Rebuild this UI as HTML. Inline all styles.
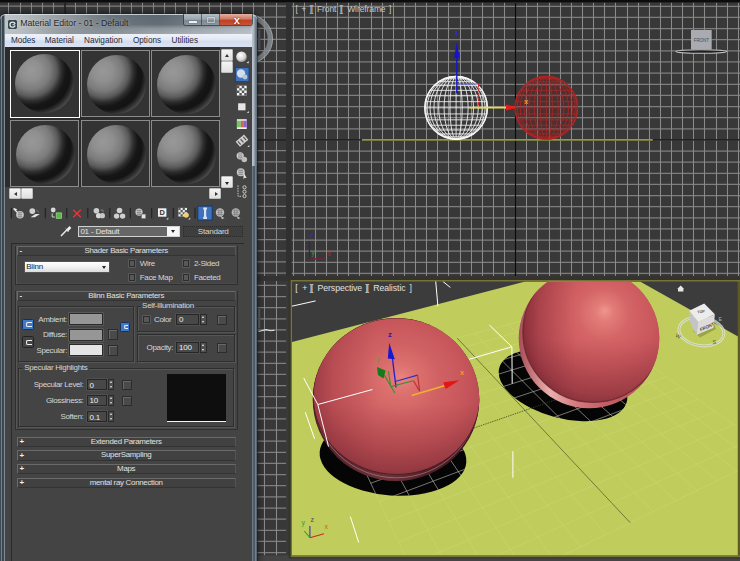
<!DOCTYPE html>
<html><head><meta charset="utf-8"><title>Material Editor</title>
<style>
html,body{margin:0;padding:0;background:#3a3a3a;}
body{width:740px;height:561px;overflow:hidden;position:relative;font-family:"Liberation Sans",sans-serif;}
#me{position:absolute;left:0;top:0;width:258px;height:561px;font-size:8.2px;color:#e6e6e6;}
#me div, #me span, #me i{position:absolute;box-sizing:border-box;}
.glass{left:0;top:14px;width:257px;height:560px;border-radius:4.5px 4.5px 0 0;background:linear-gradient(90deg,#3c4852 0,#3e4a54 1px,#7e8c96 1.6px,#3a4650 2.2px,#3a4650 3.9px,#8a969e 4.6px,#bcc2c5 5.3px,#b6bcbf 22px,#969ea3 60px,#757f86 110px,#6f7982 160px,#8a949e 215px,#9aa5af 250px,#bcc5cc 253px,#74828e 255.5px,#5c6872 257px);box-shadow:0 0 0 0.6px rgba(20,25,30,.6), 0 0 7px 1px rgba(0,0,0,.55), inset 0 1px 0 rgba(225,232,238,.75);border-radius:5.5px 5.5px 0 0;}
.ticon{left:7px;top:18.5px;width:11px;height:11px;}
.title{left:20.2px;top:17.8px;font-size:8.8px;color:#23292f;white-space:nowrap;letter-spacing:-0.06px;text-shadow:0 0 3px rgba(255,255,255,.55);}
.cap{left:182.5px;top:14px;width:70px;height:12.4px;border-radius:0 0 3px 3px;border:0.7px solid rgba(40,48,56,.7);border-top:none;overflow:hidden;}
.cb{top:0;height:12.4px;}
.cb.min{left:0;width:18.8px;background:linear-gradient(#b4bec6,#98a3ad 45%,#7d8993 52%,#8c98a2);border-right:0.7px solid rgba(40,48,56,.6);}
.cb.max{left:18.8px;width:17.6px;background:linear-gradient(#b4bec6,#98a3ad 45%,#7d8993 52%,#8c98a2);border-right:0.7px solid rgba(40,48,56,.6);}
.cb.cls{left:36.4px;width:33.6px;background:linear-gradient(#e2b0a4,#d27860 42%,#bf4026 52%,#c9583a);}
.cb.min i{left:5.5px;top:6.6px;width:8px;height:2.6px;background:#eef1f4;border-radius:.5px;box-shadow:0 0 1px #333;}
.cb.max i{left:5.2px;top:3.2px;width:7.5px;height:6px;border:1.4px solid #dfe4e8;box-shadow:0 0 1px #333;opacity:.6}
.cb.cls span{left:0;top:-0.5px;width:33.6px;text-align:center;font-size:11px;font-weight:bold;color:#fff;line-height:12px;text-shadow:0 0 1.5px #300;}
.menubar{left:5.3px;top:33.6px;width:246.6px;height:13.8px;background:linear-gradient(#eef2f8,#e2e8f4 45%,#d4dcee 55%,#dbe3f2);color:#262a3c;font-size:8.2px;}
.menubar span{top:2.2px;white-space:nowrap;}
.client{left:5.3px;top:47.3px;width:246.6px;height:514px;background:#444;}
#me i, #me u, #me b, #me em{font-style:normal;text-decoration:none;font-weight:normal;display:block;position:absolute;box-sizing:border-box;}
.client{left:5.3px;top:47.3px;width:246.6px;height:514px;background:#444;}
.slotbg{left:5.3px;top:47.3px;width:215px;height:139.9px;background:#2c2c2c;}
.slot{width:69px;height:67px;border:1px solid #8c8c8c;background:#333;overflow:hidden;}
.slot.act{border:1.9px solid #fff;left:9.6px!important;top:49.5px!important;width:70.6px;height:68.6px;}
.slot b{left:5px;top:4.1px;width:59px;height:59px;border-radius:50%;background:radial-gradient(circle 41.5px at 36% 36%,transparent 0,transparent 81%,rgba(110,110,110,.32) 90%,rgba(128,128,128,.6) 100%),radial-gradient(circle 46px at 27% 28%,#989898 0,#8f8f8f 22%,#7b7b7b 42%,#5b5b5b 56%,#2c2c2c 67%,#161616 76%,#101010 100%);}
.slot.act b{left:4.7px;top:3.8px}
.vsb{left:221px;top:49.2px;width:11.8px;height:138.4px;}
.hsb{left:8.8px;top:188px;width:212px;height:10.9px;}
#me .btn{background:linear-gradient(#f4f4f4,#e0e0e0);border:.6px solid #bdbdbd;border-radius:1px;}
.vsb .btn{left:0;width:11.8px}.hsb .btn{top:0;height:10.9px}
.ar{width:0;height:0;border:2.6px solid transparent;}
.ar.up{border-bottom:3px solid #333;border-top:none;left:3.2px;top:4px}
.ar.dn{border-top:3px solid #222;border-bottom:none;left:3.2px;top:4.4px}
.ar.lf{border-right:3px solid #333;border-left:none;left:4px;top:2.6px}
.ar.rt{border-left:3px solid #333;border-right:none;left:4.6px;top:2.6px}
.namedd{left:78.2px;top:225.7px;width:101.8px;height:11.3px;background:#666;border:1px solid #d2d2d2;}
.namedd .t{left:1.2px;top:0.3px;font-size:8px;color:#e2e2e2;white-space:nowrap;letter-spacing:-.2px}
.namedd .ddb{right:0;top:0;width:12px;height:9.3px;background:#f6f6f6;}
.namedd .ddb .ar{left:3.6px;top:3.4px}
.stdbtn{left:183.2px;top:225.7px;width:60px;height:11.3px;background:#3e3e3e;border:1px dotted #2a2a2a;}
.stdbtn span{left:0;width:58px;text-align:center;top:0.1px;font-size:8.1px;color:#d6d6d6;letter-spacing:-.25px}
.panel{left:11.4px;top:243px;width:232.6px;height:320px;background:#444;border-left:1.2px solid #2b2b2b;border-top:1px solid #2b2b2b;}
.rbody{left:14.6px;width:223.6px;border:1px solid #2f2f2f;border-top:none;box-shadow:inset 1px 0 0 #555,inset 0 -1px 0 #4a4a4a;}
.rhead{left:16.8px;width:218.8px;height:10.2px;background:#414141;border:1px solid #6a6a6a;border-right-color:#555;border-bottom-color:#333;border-radius:1px;}
.rhead span{left:0;width:100%;text-align:center;top:0px;font-size:7.9px;line-height:8.4px;color:#e2e2e2;letter-spacing:-.28px;white-space:nowrap}
.rhead em{left:1.6px;top:0.4px;font-size:8px;line-height:8.4px;color:#f0f0f0;font-weight:bold!important}
.ddw{background:linear-gradient(#fff,#f2f2f2 50%,#dcdcdc);border:1px solid #555;}
.ddw span{left:1.2px;top:0.6px;font-size:8px;color:#1c1c1c;letter-spacing:-.2px}
.chk{width:6.6px;height:6.6px;background:#585858;border:1px solid #2c2c2c;box-shadow:0 0 0 .6px #6a6a6a;}
.lbl{font-size:8px;color:#d6d6d6;white-space:nowrap;letter-spacing:-.36px;line-height:9px}
.lbl.r{text-align:right}
.glbl{font-size:8px;color:#d6d6d6;white-space:nowrap;letter-spacing:-.3px;line-height:9px;background:#444;padding:0 1.6px}
.grp{border:1px solid #2e2e2e;box-shadow:inset 1px 1px 0 #565656,1px 1px 0 #565656;}
.sw{width:34px;height:12.2px;border:1px solid #2a2a2a;box-shadow:0 0 0 .5px #6e6e6e;}
.mbtn{width:9.4px;height:10.6px;background:#4a4a4a;border:1px solid #2c2c2c;box-shadow:inset 1px 1px 0 #686868;}
.lock{width:11.6px;height:11.8px;background:#444;border:1px solid #222;border-radius:1.5px;}
.lock.on{background:#3f79c9;border-color:#16305a;}
.lock b{left:3.4px;top:2.8px;width:6px;height:4.6px;border:1.5px solid #f0f0f0;border-right:none;border-radius:2px 0 0 2px}
.lock.sm{width:9.4px;height:10px}.lock.sm b{left:2.4px;top:2.2px;width:4.6px;height:4px}
.spn{height:11px;background:#484848;border:1px solid #262626;box-shadow:0 0 0 .5px #5c5c5c;}
.spn span{left:1.6px;top:0.4px;font-size:8px;line-height:9px;color:#f0f0f0;letter-spacing:-.15px}
.spa{width:6.6px;height:11px;background:#505050;border:1px solid #2a2a2a;}
.spa:before{content:"";position:absolute;left:0.9px;top:1px;border:1.5px solid transparent;border-bottom:2px solid #f0f0f0;border-top:none}
.spa:after{content:"";position:absolute;left:0.9px;bottom:1px;border:1.5px solid transparent;border-top:2px solid #f0f0f0;border-bottom:none}
.graph{left:167.2px;top:373.8px;width:58.4px;height:48.6px;background:#0e0e0e;border-bottom:1.2px solid #f4f4f4;}
.gl-r{left:251.9px;top:166px;width:5.1px;height:400px;background:linear-gradient(90deg,#84929e 0,#525f6c 1px,#4d5a66 2.6px,#74838f 3.6px,#46525d 5.1px);}
.gl-t{left:70px;top:15px;width:182px;height:18.6px;background:linear-gradient(to bottom,rgba(20,30,40,.2),rgba(20,30,40,.12) 50%,rgba(255,255,255,.22) 72%,rgba(255,255,255,.32));-webkit-mask-image:linear-gradient(90deg,transparent,#000 45%);mask-image:linear-gradient(90deg,transparent,#000 45%);}
</style></head>
<body>
<svg id="bg" width="740" height="561" viewBox="0 0 740 561" style="position:absolute;left:0;top:0">
<defs>
<radialGradient id="sph1" cx="0.5" cy="0.44" r="0.6" fx="0.53" fy="0.38">
<stop offset="0" stop-color="#e8847f"/><stop offset="0.15" stop-color="#dd716f"/><stop offset="0.4" stop-color="#d06163"/><stop offset="0.7" stop-color="#c5555a"/><stop offset="0.9" stop-color="#b24a52"/><stop offset="1" stop-color="#963c47"/></radialGradient>
<radialGradient id="sph2" cx="0.55" cy="0.43" r="0.62" fx="0.585" fy="0.345">
<stop offset="0" stop-color="#ee958f"/><stop offset="0.1" stop-color="#e37d79"/><stop offset="0.3" stop-color="#d46466"/><stop offset="0.6" stop-color="#c9575c"/><stop offset="0.85" stop-color="#b84c54"/><stop offset="1" stop-color="#9a3e49"/></radialGradient>
<linearGradient id="dkL" x1="0" y1="0" x2="1" y2="0"><stop offset="0" stop-color="#500a18" stop-opacity="0.42"/><stop offset="0.12" stop-color="#500a18" stop-opacity="0.2"/><stop offset="0.38" stop-color="#500a18" stop-opacity="0"/></linearGradient>
<clipPath id="cpP"><rect x="292" y="281.5" width="445.8" height="273.7"/></clipPath>
<clipPath id="cpF"><rect x="291.5" y="2.5" width="449" height="273.5"/></clipPath>
</defs>
<rect width="740" height="561" fill="#3a3a3a"/>
<rect x="0" y="2.5" width="286.10" height="273.80" fill="#383838"/><path d="M0 6.00H286.1M0 17.13H286.1M0 28.26H286.1M0 39.39H286.1M0 50.52H286.1M0 61.65H286.1M0 72.78H286.1M0 83.91H286.1M0 95.04H286.1M0 106.17H286.1M0 117.30H286.1M0 128.43H286.1M0 139.56H286.1M0 150.69H286.1M0 161.82H286.1M0 172.95H286.1M0 184.08H286.1M0 195.21H286.1M0 206.34H286.1M0 217.47H286.1M0 228.60H286.1M0 239.73H286.1M0 250.86H286.1M0 261.99H286.1M0 273.12H286.1" stroke="#7e7e7e" stroke-width="1.25" fill="none"/><path d="M8.5 2.5V276.3M20.5 2.5V276.3M31.5 2.5V276.3M42.5 2.5V276.3M53.5 2.5V276.3M64.5 2.5V276.3M75.5 2.5V276.3M86.5 2.5V276.3M97.5 2.5V276.3M109.5 2.5V276.3M120.5 2.5V276.3M131.5 2.5V276.3M142.5 2.5V276.3M153.5 2.5V276.3M164.5 2.5V276.3M175.5 2.5V276.3M186.5 2.5V276.3M198.5 2.5V276.3M209.5 2.5V276.3M220.5 2.5V276.3M231.5 2.5V276.3M242.5 2.5V276.3M253.5 2.5V276.3M264.5 2.5V276.3M276.5 2.5V276.3" stroke="#8a8a8a" stroke-width="1.05" fill="none"/>
<rect x="0" y="281" width="286.10" height="274.60" fill="#383838"/><path d="M0 285.40H286.1M0 296.53H286.1M0 307.66H286.1M0 318.79H286.1M0 329.92H286.1M0 341.05H286.1M0 352.18H286.1M0 363.31H286.1M0 374.44H286.1M0 385.57H286.1M0 396.70H286.1M0 407.83H286.1M0 418.96H286.1M0 430.09H286.1M0 441.22H286.1M0 452.35H286.1M0 463.48H286.1M0 474.61H286.1M0 485.74H286.1M0 496.87H286.1M0 508.00H286.1M0 519.13H286.1M0 530.26H286.1M0 541.39H286.1M0 552.52H286.1" stroke="#7e7e7e" stroke-width="1.25" fill="none"/><path d="M8.5 281V555.6M20.5 281V555.6M31.5 281V555.6M42.5 281V555.6M53.5 281V555.6M64.5 281V555.6M75.5 281V555.6M86.5 281V555.6M97.5 281V555.6M109.5 281V555.6M120.5 281V555.6M131.5 281V555.6M142.5 281V555.6M153.5 281V555.6M164.5 281V555.6M175.5 281V555.6M186.5 281V555.6M198.5 281V555.6M209.5 281V555.6M220.5 281V555.6M231.5 281V555.6M242.5 281V555.6M253.5 281V555.6M264.5 281V555.6M276.5 281V555.6" stroke="#8a8a8a" stroke-width="1.05" fill="none"/>
<rect x="291.5" y="2.5" width="448.50" height="273.80" fill="#383838"/><path d="M291.5 6.34H740M291.5 17.47H740M291.5 28.60H740M291.5 39.73H740M291.5 50.86H740M291.5 61.99H740M291.5 73.12H740M291.5 84.25H740M291.5 95.38H740M291.5 106.51H740M291.5 117.64H740M291.5 128.77H740M291.5 139.90H740M291.5 151.03H740M291.5 162.16H740M291.5 173.29H740M291.5 184.42H740M291.5 195.55H740M291.5 206.68H740M291.5 217.81H740M291.5 228.94H740M291.5 240.07H740M291.5 251.20H740M291.5 262.33H740M291.5 273.46H740" stroke="#7e7e7e" stroke-width="1.25" fill="none"/><path d="M293.5 2.5V276.3M304.5 2.5V276.3M315.5 2.5V276.3M326.5 2.5V276.3M337.5 2.5V276.3M348.5 2.5V276.3M359.5 2.5V276.3M371.5 2.5V276.3M382.5 2.5V276.3M393.5 2.5V276.3M404.5 2.5V276.3M415.5 2.5V276.3M426.5 2.5V276.3M437.5 2.5V276.3M448.5 2.5V276.3M460.5 2.5V276.3M471.5 2.5V276.3M482.5 2.5V276.3M493.5 2.5V276.3M504.5 2.5V276.3M515.5 2.5V276.3M526.5 2.5V276.3M537.5 2.5V276.3M549.5 2.5V276.3M560.5 2.5V276.3M571.5 2.5V276.3M582.5 2.5V276.3M593.5 2.5V276.3M604.5 2.5V276.3M615.5 2.5V276.3M627.5 2.5V276.3M638.5 2.5V276.3M649.5 2.5V276.3M660.5 2.5V276.3M671.5 2.5V276.3M682.5 2.5V276.3M693.5 2.5V276.3M704.5 2.5V276.3M716.5 2.5V276.3M727.5 2.5V276.3M738.5 2.5V276.3" stroke="#8a8a8a" stroke-width="1.05" fill="none"/>
<path d="M0 139.8H286.1M64.9 2.5V16" stroke="#0a0a0a" stroke-width="1.3"/>
<circle cx="248" cy="39" r="22.2" fill="none" stroke="#868c92" stroke-width="5" opacity="0.85"/>
<circle cx="248" cy="39" r="24.6" fill="none" stroke="#c4c8cc" stroke-width="0.8" opacity="0.7"/>
<rect x="257.8" y="29.7" width="2.6" height="19.6" fill="#5c5e62"/>
<rect x="258" y="308.8" width="2.3" height="19.6" fill="#5e6064"/>
<path d="M258.5 331.5L266 329.6L270.5 330.8L274.5 330.2" stroke="#e4e4e4" stroke-width="1.1" fill="none"/>
<rect x="0" y="0" width="740" height="2.4" fill="#0c0c0c"/>
<rect x="286.1" y="2.4" width="5.4" height="274" fill="#303030"/>
<rect x="0" y="276" width="740" height="5" fill="#333"/>
<rect x="0" y="555.5" width="740" height="6" fill="#444"/>
<g clip-path="url(#cpF)">
<path d="M515.5 2.5V276.3" stroke="#0a0a0a" stroke-width="1.2"/>
<path d="M291.5 139.8H740" stroke="#0a0a0a" stroke-width="1.3"/>
<path d="M362 139.8H652.7" stroke="#b9c24a" stroke-width="1.3"/>
<circle cx="546.3" cy="107.8" r="31.4" fill="#7a1c1c" opacity="0.3"/>
<g fill="none" stroke="#b82424" stroke-width="0.8" opacity="0.9"><circle cx="546.3" cy="107.8" r="31.4" stroke-width="1.12"/><path d="M540.17 77.00H552.43"/><path d="M534.28 78.79H558.32"/><path d="M528.86 81.69H563.74"/><path d="M524.10 85.60H568.50"/><path d="M520.19 90.36H572.41"/><path d="M517.29 95.78H575.31"/><path d="M515.50 101.67H577.10"/><path d="M514.90 107.80H577.70"/><path d="M515.50 113.93H577.10"/><path d="M517.29 119.82H575.31"/><path d="M520.19 125.24H572.41"/><path d="M524.10 130.00H568.50"/><path d="M528.86 133.91H563.74"/><path d="M534.28 136.81H558.32"/><path d="M540.17 138.60H552.43"/><ellipse cx="546.3" cy="107.8" rx="31.40" ry="31.4"/><ellipse cx="546.3" cy="107.8" rx="30.80" ry="31.4"/><ellipse cx="546.3" cy="107.8" rx="29.01" ry="31.4"/><ellipse cx="546.3" cy="107.8" rx="26.11" ry="31.4"/><ellipse cx="546.3" cy="107.8" rx="22.20" ry="31.4"/><ellipse cx="546.3" cy="107.8" rx="17.44" ry="31.4"/><ellipse cx="546.3" cy="107.8" rx="12.02" ry="31.4"/><ellipse cx="546.3" cy="107.8" rx="6.13" ry="31.4"/><path d="M546.3 76.4V139.2"/></g>
<g fill="none" stroke="#ffffff" stroke-width="0.85" opacity="0.95"><circle cx="456.1" cy="107.8" r="31.4" stroke-width="1.19"/><path d="M449.97 77.00H462.23"/><path d="M444.08 78.79H468.12"/><path d="M438.66 81.69H473.54"/><path d="M433.90 85.60H478.30"/><path d="M429.99 90.36H482.21"/><path d="M427.09 95.78H485.11"/><path d="M425.30 101.67H486.90"/><path d="M424.70 107.80H487.50"/><path d="M425.30 113.93H486.90"/><path d="M427.09 119.82H485.11"/><path d="M429.99 125.24H482.21"/><path d="M433.90 130.00H478.30"/><path d="M438.66 133.91H473.54"/><path d="M444.08 136.81H468.12"/><path d="M449.97 138.60H462.23"/><ellipse cx="456.1" cy="107.8" rx="31.40" ry="31.4"/><ellipse cx="456.1" cy="107.8" rx="30.80" ry="31.4"/><ellipse cx="456.1" cy="107.8" rx="29.01" ry="31.4"/><ellipse cx="456.1" cy="107.8" rx="26.11" ry="31.4"/><ellipse cx="456.1" cy="107.8" rx="22.20" ry="31.4"/><ellipse cx="456.1" cy="107.8" rx="17.44" ry="31.4"/><ellipse cx="456.1" cy="107.8" rx="12.02" ry="31.4"/><ellipse cx="456.1" cy="107.8" rx="6.13" ry="31.4"/><path d="M456.1 76.4V139.2"/></g>
<path d="M456.8 93.5V57" stroke="#1414c8" stroke-width="1.4"/>
<path d="M456.8 42L459.6 58H454 Z" fill="#1414d0"/>
<path d="M456.8 84H478.6" stroke="#5a5ad8" stroke-width="1.2"/>
<path d="M478.6 84V107.5" stroke="#c03030" stroke-width="1.2" stroke-dasharray="3 1.5"/>
<path d="M469.4 107.6H507" stroke="#e6dc50" stroke-width="1.8"/>
<path d="M518 107.6L506 104.6V110.6Z" fill="#f01818"/>
<text x="455" y="35" font-family="Liberation Sans, sans-serif" font-size="7" fill="#2a2ad8" font-weight="bold">z</text>
<text x="524.3" y="103.6" font-family="Liberation Sans, sans-serif" font-size="7" fill="#f0a020" font-weight="bold">x</text>
<path d="M309.5 241.5V259H325.3" stroke-width="1.1" fill="none" stroke="#202090"/>
<path d="M309.5 259H325.3" stroke-width="1.1" fill="none" stroke="#a02020"/>
<text x="310" y="238" font-family="Liberation Sans, sans-serif" font-size="6.5" fill="#3030c0">z</text>
<text x="327.5" y="255.5" font-family="Liberation Sans, sans-serif" font-size="6.5" fill="#b02828">x</text>
<text x="311.5" y="255" font-family="Liberation Sans, sans-serif" font-size="6.5" fill="#30a030">y</text>
<ellipse cx="701.3" cy="51.5" rx="25.4" ry="1.8" fill="#202020" stroke="#c4c4c4" stroke-width="1.1"/>
<rect x="691" y="30" width="20.7" height="19.6" fill="#a9abb0"/>
<text x="701.3" y="42" text-anchor="middle" font-family="Liberation Sans, sans-serif" font-size="4.5" fill="#4a4c52" letter-spacing="-0.1">FRONT</text>
</g>
<g font-family="Liberation Sans, sans-serif" font-size="8.5" fill="#c8c8c8"><text x="295.4" y="11.6" letter-spacing="0">[</text><text x="301.3" y="11.6" letter-spacing="0">+</text><text x="309.6" y="11.6" letter-spacing="-1.0">][</text><text x="317" y="11.6" letter-spacing="-0.1">Front</text><text x="339.4" y="11.6" letter-spacing="-1.0">][</text><text x="347.2" y="11.6" letter-spacing="-0.1">Wireframe</text><text x="389" y="11.6" letter-spacing="0">]</text></g>
<rect x="288.6" y="277" width="452" height="281.4" fill="#34332c"/>
<rect x="290.7" y="280" width="452" height="277.2" fill="#777238"/>
<rect x="737.8" y="281.5" width="3" height="274" fill="#5e5a24"/>
<rect x="292" y="281.5" width="445.8" height="273.7" fill="#3c3c3c"/>
<g clip-path="url(#cpP)">
<path d="M292 342L525.3 281.5H640L738 336.6V556H292Z" fill="#c0cd5c"/>
<clipPath id="cpPl"><path d="M292 342L525.3 281.5H640L738 336.6V556H292Z"/></clipPath>
<g clip-path="url(#cpPl)">
<ellipse cx="393" cy="457" rx="73.5" ry="38.5" fill="#050505" transform="rotate(4 393 457)"/>
<ellipse cx="563" cy="385" rx="66" ry="33" fill="#050505" transform="rotate(15 563 385)"/>
<path d="M434.2 617.7L773.8 453.3M434.2 617.7L319.7 375.0M421.3 590.3L753.0 438.5M466.6 602.1L341.1 369.2M409.5 565.2L733.5 424.6M497.2 587.2L362.0 363.6M398.6 542.2L715.2 411.5M526.4 573.1L382.2 358.2M388.6 521.0L698.0 399.3M554.3 559.6L401.8 353.0M379.3 501.4L681.8 387.7M580.8 546.8L420.8 347.9M370.8 483.2L666.5 376.8M606.1 534.5L439.3 342.9M355.4 450.6L638.5 356.8M653.5 511.6L474.7 333.4M348.4 435.9L625.5 347.6M675.7 500.8L491.6 328.9M342.0 422.2L613.3 338.9M696.9 490.5L508.1 324.5M335.9 409.3L601.6 330.5M717.3 480.7L524.2 320.2M330.1 397.2L590.5 322.6M736.9 471.2L539.8 316.0M324.7 385.8L579.9 315.1M755.7 462.1L555.0 311.9M319.7 375.0L569.9 307.9M773.8 453.3L569.9 307.9" stroke="#eef4c4" stroke-width="0.8" fill="none" opacity="0.17"/>
<clipPath id="cpSh"><ellipse cx="393" cy="457" rx="73.5" ry="38.5" fill="#050505" transform="rotate(4 393 457)"/><ellipse cx="563" cy="385" rx="66" ry="33" fill="#050505" transform="rotate(15 563 385)"/></clipPath>
<g clip-path="url(#cpSh)"><path d="M434.2 617.7L773.8 453.3M434.2 617.7L319.7 375.0M421.3 590.3L753.0 438.5M466.6 602.1L341.1 369.2M409.5 565.2L733.5 424.6M497.2 587.2L362.0 363.6M398.6 542.2L715.2 411.5M526.4 573.1L382.2 358.2M388.6 521.0L698.0 399.3M554.3 559.6L401.8 353.0M379.3 501.4L681.8 387.7M580.8 546.8L420.8 347.9M370.8 483.2L666.5 376.8M606.1 534.5L439.3 342.9M355.4 450.6L638.5 356.8M653.5 511.6L474.7 333.4M348.4 435.9L625.5 347.6M675.7 500.8L491.6 328.9M342.0 422.2L613.3 338.9M696.9 490.5L508.1 324.5M335.9 409.3L601.6 330.5M717.3 480.7L524.2 320.2M330.1 397.2L590.5 322.6M736.9 471.2L539.8 316.0M324.7 385.8L579.9 315.1M755.7 462.1L555.0 311.9M319.7 375.0L569.9 307.9M773.8 453.3L569.9 307.9" stroke="#e8e8e8" stroke-width="0.8" fill="none" opacity="0.5"/></g>
<path d="M630.3 522.8L457.2 338.1" stroke="#5c6630" stroke-width="0.9" fill="none" opacity="0.9"/>
<path d="M362.8 466.4L652.1 366.5" stroke="#3c4420" stroke-width="0.9" fill="none" stroke-dasharray="1.4 1" opacity="0.9"/>
</g>
<clipPath id="cs2"><ellipse cx="589" cy="338.3" rx="70.3" ry="70"/></clipPath>
<linearGradient id="cr2" x1="0" y1="0" x2="1" y2="0"><stop offset="0" stop-color="#a84c56"/><stop offset="0.22" stop-color="#eab0ae"/><stop offset="0.4" stop-color="#d47c7e"/><stop offset="0.6" stop-color="#c46066"/><stop offset="1" stop-color="#b04e58"/></linearGradient>
<linearGradient id="dk" x1="0" y1="0" x2="0" y2="1"><stop offset="0" stop-color="#501018" stop-opacity="0"/><stop offset="0.55" stop-color="#501018" stop-opacity="0"/><stop offset="1" stop-color="#501018" stop-opacity="0.3"/></linearGradient>
<ellipse cx="589" cy="338.3" rx="70.3" ry="70" fill="url(#cr2)"/>
<g clip-path="url(#cs2)"><ellipse cx="593" cy="332.3" rx="70.2" ry="70" fill="url(#sph2)" stroke="#7a323c" stroke-width="1.2"/><ellipse cx="593" cy="332.3" rx="70.2" ry="70" fill="url(#dk)"/><ellipse cx="593" cy="332.3" rx="70.2" ry="70" fill="url(#dkL)"/></g>
<clipPath id="cs1"><ellipse cx="396" cy="399.5" rx="83.3" ry="81.5"/></clipPath>
<linearGradient id="cr1" x1="0" y1="0" x2="1" y2="0"><stop offset="0" stop-color="#4e2028"/><stop offset="0.45" stop-color="#6c323a"/><stop offset="0.7" stop-color="#4e2028"/><stop offset="1" stop-color="#44181f"/></linearGradient>
<ellipse cx="396" cy="399.5" rx="83.3" ry="81.5" fill="url(#cr1)"/>
<g clip-path="url(#cs1)"><ellipse cx="396.3" cy="398.2" rx="82" ry="79.6" fill="none" stroke="#c89094" stroke-width="1" opacity="0.55"/><ellipse cx="396.6" cy="396.2" rx="83.4" ry="78.3" fill="url(#sph1)" stroke="#4a1c24" stroke-width="0.9"/><ellipse cx="396.6" cy="396.2" rx="83.4" ry="78.3" fill="url(#dk)"/><ellipse cx="396.6" cy="396.2" rx="83.4" ry="78.3" fill="url(#dkL)" opacity="0.6"/></g>
<path d="M372.4 389.5L317.8 404.5L303.7 378M317.8 404.5L328.5 446.6M305.3 412.3L314.6 438.9M469.1 359.3L511.9 346.8L489.4 325M511.9 346.8L512.2 383.6M435.7 281L437.9 306.2M442.6 281.2L450.4 287.5M291.9 306.2L315.6 300.9M350.3 516.6L358.7 542.4M512.9 451.3V477.7" stroke="#ffffff" stroke-width="1" fill="none"/>
<path d="M392.5 359L396 387.3" stroke="#2020c8" stroke-width="1.3"/>
<path d="M389.2 342.7L387.8 358.6L394.8 359.2Z" fill="#1818d0"/>
<path d="M396 381.3L417.6 375.1" stroke="#3030c0" stroke-width="1.1"/>
<path d="M417.6 375.1L419.7 391.3L413.5 380.8" stroke="#b83030" stroke-width="1.1" fill="none"/>
<path d="M388.4 371.1L390.8 386.5L413.5 380.8M384.3 375.1L394.9 393" stroke="#3c8c30" stroke-width="1.1" fill="none"/>
<path d="M377 367L385.5 370.5L383.5 378.5L378 375Z" fill="#147a1a"/>
<path d="M411.6 395.4L444.3 385.7" stroke="#f0b030" stroke-width="1.6"/>
<path d="M459.5 380.2L443.3 382.3L445.6 389Z" fill="#e81414"/>
<text x="388" y="337" font-family="Liberation Sans, sans-serif" font-size="7.5" font-weight="bold" fill="#2a1aa0">z</text>
<text x="376" y="362" font-family="Liberation Sans, sans-serif" font-size="7" fill="#58a040">y</text>
<text x="460" y="375" font-family="Liberation Sans, sans-serif" font-size="7.5" font-weight="bold" fill="#f09a28">x</text>
<path d="M309.9 537.7V526" stroke="#3838b0" stroke-width="1.1"/>
<path d="M309.9 537.7L323.9 533.7" stroke="#c03020" stroke-width="1.1"/>
<path d="M309.9 537.7L304.3 531" stroke="#30a030" stroke-width="1.1"/>
<text x="301.5" y="524.5" font-family="Liberation Sans, sans-serif" font-size="7" fill="#30a030">y</text>
<text x="310.5" y="521.5" font-family="Liberation Sans, sans-serif" font-size="7" fill="#444a6a">z</text>
<text x="324.5" y="529" font-family="Liberation Sans, sans-serif" font-size="7" fill="#d06030">x</text>
</g>
<g clip-path="url(#cpP)">
<ellipse cx="701.4" cy="331.5" rx="22.6" ry="14.2" fill="none" stroke="#e4e8d8" stroke-width="3" opacity="0.75" transform="rotate(8 701.4 331.5)"/>
<ellipse cx="701.4" cy="331.5" rx="22.6" ry="14.2" fill="none" stroke="#9aa078" stroke-width="0.6" opacity="0.8" transform="rotate(8 701.4 331.5)"/>
<path d="M693 331L700 337.5L716 329L714 324Z" fill="#7c8438" opacity="0.55"/>
<path d="M689.2 310.7L704.2 303.5L714.9 314.2L698.2 322.1Z" fill="#ececec"/>
<path d="M698.2 322.1L714.9 314.2L713.5 327.8L696.4 334.9Z" fill="#dcdcdc"/>
<path d="M689.2 310.7L698.2 322.1L696.4 334.9L690.2 322.8Z" fill="#c4c4c4"/>
<text transform="translate(700.5 331.2) rotate(-23) skewX(-8)" font-family="Liberation Sans, sans-serif" font-size="4.4" font-weight="bold" fill="#444">FRONT</text>
<text transform="translate(697.5 313.6) rotate(-10)" font-family="Liberation Sans, sans-serif" font-size="3.8" font-weight="bold" fill="#555">TOP</text>
<text x="675.6" y="338" font-family="Liberation Sans, sans-serif" font-size="5.4" fill="#50582a" transform="rotate(30 678 336)">W</text>
<text x="712.4" y="344" font-family="Liberation Sans, sans-serif" font-size="5.4" fill="#50582a">S</text>
<text x="718.4" y="321" font-family="Liberation Sans, sans-serif" font-size="5" fill="#b4b4a4">E</text>
<path d="M678 291.6v-3.4l2.7-2.6l2.7 2.6v3.4z" fill="#e8e8e8"/>
</g>
<g font-family="Liberation Sans, sans-serif" font-size="8.7" fill="#e2e2e2"><text x="295.3" y="290.6" letter-spacing="0">[</text><text x="302.2" y="290.6" letter-spacing="0">+</text><text x="309.6" y="290.6" letter-spacing="-1.0">][</text><text x="317.6" y="290.6" letter-spacing="-0.08">Perspective</text><text x="365.3" y="290.6" letter-spacing="-1.0">][</text><text x="373.2" y="290.6" letter-spacing="-0.05">Realistic</text><text x="409.6" y="290.6" letter-spacing="0">]</text></g>
</svg>
<div id="me">
  <div class="glass"></div>
  <div class="gl-r"></div>
  <div class="gl-t"></div>
  <div class="ticon"><svg width="11" height="11" viewBox="0 0 11 11"><rect x="0.5" y="0.5" width="10" height="10" rx="2" fill="#38464e" stroke="#c8d0d4" stroke-width="0.9"/><circle cx="5.5" cy="5.7" r="2.5" fill="none" stroke="#dfe6ea" stroke-width="1.3"/><path d="M5.6 5.7H9" stroke="#38464e" stroke-width="1.4"/><path d="M5.5 5.7H8" stroke="#dfe6ea" stroke-width="0.9"/></svg></div>
  <div class="title">Material Editor - 01 - Default</div>
  <div class="cap">
    <div class="cb min"><i></i></div><div class="cb max"><i></i></div><div class="cb cls"><span>x</span></div>
  </div>
  <div class="menubar">
    <span style="left:5.6px">Modes</span><span style="left:39.5px">Material</span><span style="left:78.7px">Navigation</span><span style="left:127.6px">Options</span><span style="left:166.3px">Utilities</span>
  </div>
  <div class="client"></div>
  <div class="slotbg"></div>
  <div class="slot act" style="left:10.2px;top:50.2px"><b></b></div>
  <div class="slot" style="left:80.7px;top:50.2px"><b></b></div>
  <div class="slot" style="left:150.6px;top:50.2px"><b></b></div>
  <div class="slot" style="left:10.2px;top:119.8px"><b></b></div>
  <div class="slot" style="left:80.7px;top:119.8px"><b></b></div>
  <div class="slot" style="left:150.6px;top:119.8px"><b></b></div>
  <div class="vsb"><i class="btn" style="top:0;height:12.2px"><u class="ar up"></u></i><i class="btn" style="top:12.2px;height:11.3px"></i><i class="btn" style="bottom:0;height:11.4px"><u class="ar dn"></u></i></div>
  <div class="hsb"><i class="btn" style="left:0;width:12px"><u class="ar lf"></u></i><i class="btn" style="left:12px;width:12px"></i><i class="btn" style="right:0;width:11.6px"><u class="ar rt"></u></i></div>
  <!-- right icon column -->
  <svg class="ricons" width="19" height="153" viewBox="232.5 47.5 19 153" style="position:absolute;left:232.5px;top:47.5px">
    <defs><radialGradient id="ws" cx="0.4" cy="0.35" r="0.7"><stop offset="0" stop-color="#ffffff"/><stop offset="0.6" stop-color="#d8d8d8"/><stop offset="1" stop-color="#8a8a8a"/></radialGradient></defs>
    <circle cx="241" cy="56.3" r="5.3" fill="url(#ws)"/><path d="M246 62.5l2.2-2v2.2z" fill="#e8e8e8"/>
    <rect x="234.8" y="66.8" width="13.8" height="14.4" fill="#3f74c0" stroke="#1e3c6e" stroke-width="1"/>
    <circle cx="240.5" cy="73" r="4.2" fill="#d4dde8"/><circle cx="244.5" cy="76.5" r="2.4" fill="#b9c6d8"/>
    <rect x="236.4" y="85.2" width="9.8" height="9.8" fill="#f4f4f4"/>
    <path d="M236.4 85.2h2.45v2.45h-2.45zM241.3 85.2h2.45v2.45h-2.45zM238.85 87.65h2.45v2.45h-2.45zM243.75 87.65h2.45v2.45h-2.45zM236.4 90.1h2.45v2.45h-2.45zM241.3 90.1h2.45v2.45h-2.45zM238.85 92.55h2.45v2.45h-2.45zM243.75 92.55h2.45v2.45h-2.45z" fill="#555"/>
    <rect x="237.6" y="102.8" width="7.4" height="7" fill="#e6e6e6"/><path d="M246.3 112.6l2-2v2z" fill="#e0e0e0"/>
    <rect x="236.4" y="118.7" width="9.8" height="9.8" fill="#f0f0f0"/><rect x="236.4" y="120.2" width="4" height="6.6" fill="#74c860"/><rect x="240.4" y="120.2" width="3" height="6.6" fill="#d86060"/><rect x="243.4" y="120.2" width="2.8" height="6.6" fill="#8c60c8"/>
    <g transform="rotate(-40 241.5 140.2)"><rect x="236" y="136.8" width="11" height="6.8" fill="#d0d0d0"/><path d="M238 138v4.4M241.5 138v4.4M245 138v4.4" stroke="#555" stroke-width="1.2"/></g><path d="M246.8 146.6l2-2v2z" fill="#e0e0e0"/>
    <circle cx="239.7" cy="155.3" r="3.6" fill="#cfcfcf"/><circle cx="243.8" cy="159" r="2.8" fill="#bdbdbd"/><path d="M237.5 153.5h4.4M237.5 155.5h4.4M237.5 157.3h4.4" stroke="#666" stroke-width=".7"/>
    <circle cx="240.3" cy="171.8" r="4" fill="#c4c4c4"/><path d="M238 169.8h4.6M238 171.8h4.6M238 173.8h4.6" stroke="#666" stroke-width=".7"/><path d="M243 172l3.2 5.5-2.2-.3-1 1.8z" fill="#e8e8e8"/>
    <path d="M237.5 184.8v11h3" stroke="#d8d8d8" stroke-width="0.9" fill="none" stroke-dasharray="1.5 1"/><circle cx="244" cy="186.8" r="1.6" fill="none" stroke="#d8d8d8" stroke-width=".9"/><circle cx="244" cy="191.2" r="1.6" fill="none" stroke="#d8d8d8" stroke-width=".9"/><circle cx="244" cy="195.6" r="1.6" fill="none" stroke="#d8d8d8" stroke-width=".9"/>
  </svg>
  <!-- toolbar row -->
  <svg class="tbar" width="240" height="18" viewBox="8 203.5 240 18" style="position:absolute;left:8px;top:203.5px">
    <g stroke="#222" stroke-width="1.1"><path d="M11.4 207.3v10.5M45.3 207.3v10.5M66.8 207.3v10.5M87.8 207.3v10.5M109.8 207.3v10.5M130.3 207.3v10.5M151.7 207.3v10.5M173.3 207.3v10.5M195 207.3v10.5"/></g>
    <!-- 1 get material -->
    <circle cx="20" cy="214.2" r="3.8" fill="#d2d2d2"/><path d="M17.6 212.2h4.8M17.6 214.2h4.8M17.6 216.2h4.8M19 211v6.4M21 211v6.4" stroke="#777" stroke-width=".6"/><path d="M13.5 208l4 4" stroke="#e8e8e8" stroke-width="1.2"/><path d="M14 207.5l1.2 3.2 2-2z" fill="#eee"/>
    <!-- 2 put to scene -->
    <circle cx="32.3" cy="210.6" r="2.9" fill="#cfcfcf"/><path d="M30.5 216.8l5-3.2h4.4l-5 3.2z" fill="#e2e2e2"/><path d="M36.5 209.5l2.5 2.3" stroke="#888" stroke-width=".8"/>
    <!-- 3 assign -->
    <circle cx="53.2" cy="209.5" r="2.4" fill="#d8d8d8"/><rect x="56.2" y="212.4" width="5.4" height="5.4" fill="#58b848" stroke="#9be08c" stroke-width=".7"/><path d="M52.2 213v3.5h2.6" stroke="#e0e0e0" stroke-width=".9" fill="none"/>
    <!-- 4 reset X -->
    <path d="M73.2 209.2l7.6 7.6M80.8 209.2l-7.6 7.6" stroke="#e0383c" stroke-width="1.5"/>
    <!-- 5 copy -->
    <circle cx="96.4" cy="210.3" r="2.8" fill="#cdcdcd"/><circle cx="98.6" cy="215.2" r="2.6" fill="#d8d8d8"/><circle cx="102.4" cy="215.2" r="2.6" fill="#c8c8c8"/><path d="M100.5 209.5h2.5v2.4" stroke="#999" stroke-width=".7" fill="none"/>
    <!-- 6 make unique -->
    <circle cx="119.5" cy="210" r="2.8" fill="#d0d0d0"/><circle cx="116.6" cy="215.6" r="2.7" fill="#d0d0d0"/><circle cx="122.6" cy="215.6" r="2.7" fill="#d0d0d0"/>
    <!-- 7 put to library -->
    <circle cx="139" cy="211.6" r="3.6" fill="#cfcfcf"/><path d="M136.6 210h4.8M136.6 212h4.8M136.6 213.8h4.8M138 209v5.6M140 209v5.6" stroke="#777" stroke-width=".6"/><rect x="141.5" y="213.6" width="4.2" height="4.4" fill="#e4e4e4" stroke="#666" stroke-width=".5"/>
    <!-- 8 material id -->
    <rect x="158" y="207.8" width="8.4" height="8.4" fill="#f0f0f0"/><text x="159.6" y="214.6" font-family="Liberation Sans, sans-serif" font-size="7.4" font-weight="bold" fill="#333">D</text><path d="M166.2 219l2.1-2v2z" fill="#ddd"/>
    <!-- 9 show map -->
    <rect x="178.4" y="207.4" width="8.6" height="8.6" fill="#ececec"/><path d="M178.4 207.4h2.15v2.15h-2.15zM182.7 207.4h2.15v2.15h-2.15zM180.55 209.55h2.15v2.15h-2.15zM184.85 209.55h2.15v2.15h-2.15zM178.4 211.7h2.15v2.15h-2.15zM182.7 211.7h2.15v2.15h-2.15zM180.55 213.85h2.15v2.15h-2.15zM184.85 213.85h2.15v2.15h-2.15z" fill="#555"/><circle cx="186.2" cy="214.6" r="2.6" fill="#f0d070"/><path d="M188.2 219l2-2v2z" fill="#ddd"/>
    <!-- 10 active -->
    <rect x="197.8" y="205.6" width="14.4" height="14" fill="#3d72bf" stroke="#1c3866" stroke-width="1"/><path d="M203.2 208h3.8M205.1 208v9.4M203.2 217.4h3.8" stroke="#d9e2ee" stroke-width="2.2"/>
    <!-- 11,12 -->
    <circle cx="220" cy="212" r="4.2" fill="#bdbdbd"/><path d="M217.2 210.2h5.6M217.2 212.2h5.6M217.2 214h5.6M218.8 208.6v7M221.2 208.6v7" stroke="#777" stroke-width=".6"/><path d="M221 215.5l3.5 2.2-2.8.8z" fill="#c8c8c8"/>
    <circle cx="235.8" cy="212" r="4.2" fill="#b4b4b4"/><path d="M233 210.2h5.6M233 212.2h5.6M233 214h5.6M234.6 208.6v7M237 208.6v7" stroke="#777" stroke-width=".6"/><path d="M237 215.5l3.5 2.2-2.8.8z" fill="#c0c0c0"/>
  </svg>
  <!-- name row -->
  <svg width="14" height="14" viewBox="59 224 14 14" style="position:absolute;left:59px;top:224px"><path d="M61 236l6.2-6.4" stroke="#e8e8e8" stroke-width="1.5"/><path d="M66.8 230.8l3.6-3.8" stroke="#f4f4f4" stroke-width="2.6"/><path d="M65.6 228.4l3.4 3.2" stroke="#ccc" stroke-width="1"/></svg>
  <div class="namedd"><span class="t">01 - Default</span><i class="ddb"><u class="ar dn"></u></i></div>
  <div class="stdbtn"><span>Standard</span></div>

  <!-- rollout panel -->
  <div class="panel"></div>
  <div class="rbody" style="top:246px;height:39px"></div>
  <div class="rhead" style="top:245.8px"><em>-</em><span>Shader Basic Parameters</span></div>
  <div class="ddw" style="left:24px;top:260.6px;width:86.4px;height:12.2px"><span>Blinn</span><u class="ar dn" style="left:77px;top:4.2px"></u></div>
  <i class="chk" style="left:128.5px;top:260.4px"></i><span class="lbl" style="left:139.8px;top:259.2px">Wire</span>
  <i class="chk" style="left:182.6px;top:260.4px"></i><span class="lbl" style="left:194px;top:259.2px">2-Sided</span>
  <i class="chk" style="left:128.5px;top:274.2px"></i><span class="lbl" style="left:139.8px;top:273px">Face Map</span>
  <i class="chk" style="left:182.6px;top:274.2px"></i><span class="lbl" style="left:194px;top:273px">Faceted</span>

  <div class="rbody" style="top:291px;height:139px"></div>
  <div class="rhead" style="top:290.8px"><em>-</em><span>Blinn Basic Parameters</span></div>
  <div class="grp" style="left:18.2px;top:306px;width:116px;height:55.6px"></div>
  <span class="lbl r" style="left:26px;width:41px;top:314.6px">Ambient:</span>
  <span class="lbl r" style="left:26px;width:41px;top:330px">Diffuse:</span>
  <span class="lbl r" style="left:26px;width:41px;top:345.6px">Specular:</span>
  <div class="sw" style="left:69.4px;top:313.2px;background:#969696"></div>
  <div class="sw" style="left:69.4px;top:328.6px;background:#969696"></div>
  <div class="sw" style="left:69.4px;top:344.2px;background:#e5e5e5"></div>
  <i class="mbtn" style="left:108.4px;top:329.4px"></i><i class="mbtn" style="left:108.4px;top:345px"></i>
  <i class="lock on" style="left:22px;top:318.6px"><b></b></i><i class="lock" style="left:22px;top:336.2px"><b></b></i>
  <i class="lock on sm" style="left:120.4px;top:321.6px"><b></b></i>
  <div class="grp" style="left:137px;top:306px;width:97.8px;height:25.6px"></div>
  <span class="glbl" style="left:140.5px;top:301.4px">Self-Illumination</span>
  <i class="chk" style="left:143.2px;top:316.4px"></i><span class="lbl" style="left:154px;top:315.2px">Color</span>
  <div class="spn" style="left:176.3px;top:314px;width:23px"><span>0</span></div><i class="spa" style="left:200.2px;top:314px"></i>
  <i class="mbtn" style="left:216.6px;top:315px;width:10px;height:10px"></i>
  <div class="grp" style="left:137px;top:334.2px;width:97.8px;height:27.4px"></div>
  <span class="lbl" style="left:146.6px;top:342.6px">Opacity:</span>
  <div class="spn" style="left:176.3px;top:342px;width:23px"><span>100</span></div><i class="spa" style="left:200.2px;top:342px"></i>
  <i class="mbtn" style="left:216.6px;top:343px;width:10px;height:10px"></i>

  <div class="grp" style="left:18.2px;top:368.4px;width:215.6px;height:58.6px"></div>
  <span class="glbl" style="left:22.6px;top:363.4px">Specular Highlights</span>
  <span class="lbl r" style="left:24px;width:59.4px;top:380.2px">Specular Level:</span>
  <span class="lbl r" style="left:24px;width:59.4px;top:395.8px">Glossiness:</span>
  <span class="lbl r" style="left:24px;width:59.4px;top:412.4px">Soften:</span>
  <div class="spn" style="left:86.9px;top:379.2px;width:20px"><span>0</span></div><i class="spa" style="left:107.8px;top:379.2px"></i>
  <div class="spn" style="left:86.9px;top:394.8px;width:20px"><span>10</span></div><i class="spa" style="left:107.8px;top:394.8px"></i>
  <div class="spn" style="left:86.9px;top:411.4px;width:20px"><span>0.1</span></div><i class="spa" style="left:107.8px;top:411.4px"></i>
  <i class="mbtn" style="left:121.6px;top:380px;width:10px;height:10px"></i><i class="mbtn" style="left:121.6px;top:395.6px;width:10px;height:10px"></i>
  <div class="graph"></div>

  <div class="rhead" style="top:436.6px"><em>+</em><span>Extended Parameters</span></div>
  <div class="rhead" style="top:450.4px"><em>+</em><span>SuperSampling</span></div>
  <div class="rhead" style="top:464.1px"><em>+</em><span>Maps</span></div>
  <div class="rhead" style="top:477.8px"><em>+</em><span>mental ray Connection</span></div>
</div>

</body></html>
